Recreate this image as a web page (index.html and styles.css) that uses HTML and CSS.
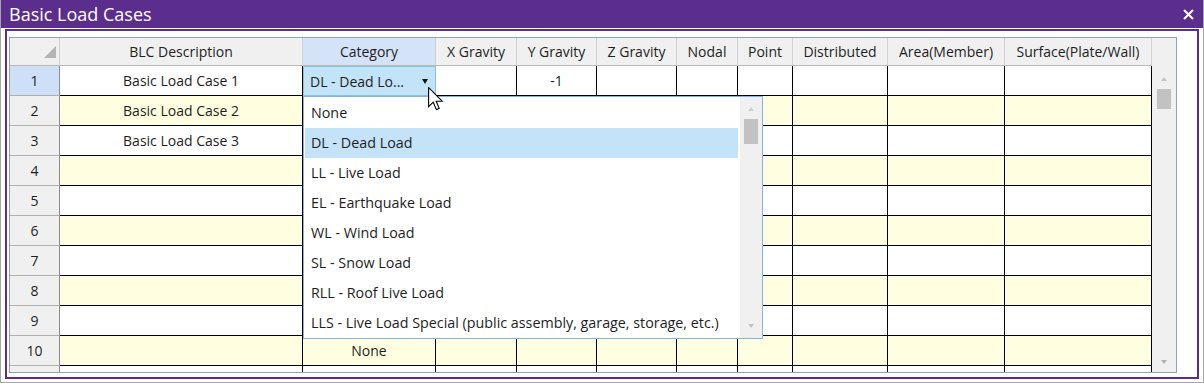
FILE: index.html
```html
<!DOCTYPE html>
<html>
  <head>
    <meta charset="utf-8" />
    <link rel="stylesheet" href="styles.css">
    <title>Basic Load Cases</title>
  </head>
  <body>
    <div class="window">
      <div class="titlebar">
        <span class="title">Basic Load Cases</span>
        <svg class="close" width="11" height="11" viewBox="0 0 11 11">
          <path d="M1 1 L10 10 M10 1 L1 10" stroke="#fff" stroke-width="2" />
        </svg>
      </div>
      <div class="body">
        <div class="frame">
          <div class="sheet">
            <div class="table">
              <div class="row head">
                <div class="c corner">
                  <svg width="12" height="12" viewBox="0 0 12 12"><polygon points="12,0 12,12 0,12" fill="#b4b4b4" /></svg>
                </div>
                <div class="c">BLC Description</div>
                <div class="c active">Category</div>
                <div class="c">X Gravity</div>
                <div class="c">Y Gravity</div>
                <div class="c">Z Gravity</div>
                <div class="c">Nodal</div>
                <div class="c">Point</div>
                <div class="c">Distributed</div>
                <div class="c">Area(Member)</div>
                <div class="c">Surface(Plate/Wall)</div>
              </div>

              <div class="row">
                <div class="c rh sel">1</div>
                <div class="c">Basic Load Case 1</div>
                <div class="c combo"><span>DL - Dead Lo...</span><span class="arrow"></span></div>
                <div class="c"></div>
                <div class="c">-1</div>
                <div class="c"></div>
                <div class="c"></div>
                <div class="c"></div>
                <div class="c"></div>
                <div class="c"></div>
                <div class="c"></div>
              </div>
              <!-- category cells of rows 2-9 sit under the open list -->
              <div class="row alt">
                <div class="c rh">2</div>
                <div class="c">Basic Load Case 2</div>
                <div class="c"></div>
                <div class="c"></div><div class="c"></div><div class="c"></div><div class="c"></div>
                <div class="c"></div><div class="c"></div><div class="c"></div><div class="c"></div>
              </div>
              <div class="row">
                <div class="c rh">3</div>
                <div class="c">Basic Load Case 3</div>
                <div class="c"></div>
                <div class="c"></div><div class="c"></div><div class="c"></div><div class="c"></div>
                <div class="c"></div><div class="c"></div><div class="c"></div><div class="c"></div>
              </div>
              <div class="row alt">
                <div class="c rh">4</div>
                <div class="c"></div>
                <div class="c"></div>
                <div class="c"></div><div class="c"></div><div class="c"></div><div class="c"></div>
                <div class="c"></div><div class="c"></div><div class="c"></div><div class="c"></div>
              </div>
              <div class="row">
                <div class="c rh">5</div>
                <div class="c"></div>
                <div class="c"></div>
                <div class="c"></div><div class="c"></div><div class="c"></div><div class="c"></div>
                <div class="c"></div><div class="c"></div><div class="c"></div><div class="c"></div>
              </div>
              <div class="row alt">
                <div class="c rh">6</div>
                <div class="c"></div>
                <div class="c"></div>
                <div class="c"></div><div class="c"></div><div class="c"></div><div class="c"></div>
                <div class="c"></div><div class="c"></div><div class="c"></div><div class="c"></div>
              </div>
              <div class="row">
                <div class="c rh">7</div>
                <div class="c"></div>
                <div class="c"></div>
                <div class="c"></div><div class="c"></div><div class="c"></div><div class="c"></div>
                <div class="c"></div><div class="c"></div><div class="c"></div><div class="c"></div>
              </div>
              <div class="row alt">
                <div class="c rh">8</div>
                <div class="c"></div>
                <div class="c"></div>
                <div class="c"></div><div class="c"></div><div class="c"></div><div class="c"></div>
                <div class="c"></div><div class="c"></div><div class="c"></div><div class="c"></div>
              </div>
              <div class="row">
                <div class="c rh">9</div>
                <div class="c"></div>
                <div class="c"></div>
                <div class="c"></div><div class="c"></div><div class="c"></div><div class="c"></div>
                <div class="c"></div><div class="c"></div><div class="c"></div><div class="c"></div>
              </div>
              <div class="row alt">
                <div class="c rh">10</div>
                <div class="c"></div>
                <div class="c">None</div>
                <div class="c"></div><div class="c"></div><div class="c"></div><div class="c"></div>
                <div class="c"></div><div class="c"></div><div class="c"></div><div class="c"></div>
              </div>
              <div class="row">
                <div class="c rh"></div>
                <div class="c"></div>
                <div class="c"></div>
                <div class="c"></div><div class="c"></div><div class="c"></div><div class="c"></div>
                <div class="c"></div><div class="c"></div><div class="c"></div><div class="c"></div>
              </div>
            </div>

            <div class="vscroll">
              <div class="vs-head"></div>
              <div class="vs-track">
                <span class="up"></span>
                <span class="thumb"></span>
                <span class="down"></span>
              </div>
            </div>

            <!-- open category list -->
            <div class="dropdown">
              <div class="dd-list">
                <div class="item">None</div>
                <div class="item hl">DL - Dead Load</div>
                <div class="item">LL - Live Load</div>
                <div class="item">EL - Earthquake Load</div>
                <div class="item">WL - Wind Load</div>
                <div class="item">SL - Snow Load</div>
                <div class="item">RLL - Roof Live Load</div>
                <div class="item">LLS - Live Load Special (public assembly, garage, storage, etc.)</div>
              </div>
              <div class="dd-scroll">
                <span class="up"></span>
                <span class="thumb"></span>
                <span class="down"></span>
              </div>
            </div>

            <svg class="cursor" width="16" height="24" viewBox="0 0 16 24">
              <path d="M0.6 0.6 L0.6 19.6 L5.2 15.2 L8.4 22.6 L11.2 21.4 L8.2 14.2 L14.2 14.2 Z" fill="#fff" stroke="#000" stroke-width="1.1" stroke-linejoin="miter" />
            </svg>
          </div>
        </div>
      </div>
    </div>
  </body>
</html>
```

FILE: styles.css
```css
body {
  margin: 0;
  background-color: #fff;
  font-family: "Open Sans", sans-serif;
  font-size: 14px;
  color: #1e1e1e;
}
.window {
  width: 1204px;
  height: 383px;
  box-sizing: border-box;
  border: 1px solid #a6a6a6;
  border-top: none;
  display: flex;
  flex-direction: column;
}
.titlebar {
  height: 28px;
  flex-shrink: 0;
  background-color: #5b2e8e;
  color: #fff;
  display: flex;
  align-items: center;
  justify-content: space-between;
  padding: 0 9px 0 8px;
}
.title {
  font-size: 18px;
}
.body {
  flex: 1;
  min-height: 0;
  padding: 1px 4px 3px 4px;
}
.frame {
  height: 100%;
  box-sizing: border-box;
  border: 2px solid #5b2e8e;
  padding: 6px 0 0 2px;
}
.sheet {
  position: relative;
  width: 1168px;
  height: 336px;
  box-sizing: border-box;
  border: 1px solid #8fa4b9;
  display: flex;
  overflow: hidden;
}
.table {
  width: 1142px;
  flex-shrink: 0;
}
.row {
  display: grid;
  grid-template-columns: 50px 243px 133px 81px 80px 80px 61px 55px 95px 117px 147px;
  height: 30px;
}
.row.head {
  height: 28px;
}
.c {
  box-sizing: border-box;
  border-right: 1px solid #000;
  border-bottom: 1px solid #000;
  display: flex;
  align-items: center;
  justify-content: center;
  white-space: nowrap;
  overflow: hidden;
}
.alt .c {
  background-color: #fffee1;
}
.head .c {
  background-color: #f0f0f0;
  border-right-color: #d0d0d0;
  border-bottom-color: #b9b9b9;
}
.head .c.active {
  background-color: #d5e3f9;
}
.head .corner {
  justify-content: flex-end;
  align-items: flex-end;
  padding: 0 3px 7px 0;
}
.c.rh,
.alt .c.rh {
  background-color: #f0f0f0;
  border-right-color: #8c8c8c;
  border-bottom-color: #b0b0b0;
}
.c.rh.sel {
  background-color: #cde0f8;
}
.c.combo {
  background-color: #c3e3f8;
  border: 1px solid #80c5dc;
  justify-content: space-between;
  padding: 0 7px 0 6px;
}
.combo .arrow {
  width: 0;
  height: 0;
  border-left: 3.5px solid transparent;
  border-right: 3.5px solid transparent;
  border-top: 5px solid #111;
}

/* scrollbars */
.vscroll {
  width: 24px;
  background-color: #f0f0f0;
  display: flex;
  flex-direction: column;
}
.vs-head {
  height: 28px;
}
.vs-track,
.dd-scroll {
  flex: 1;
  display: flex;
  flex-direction: column;
  align-items: center;
}
.up,
.down {
  width: 0;
  height: 0;
  border-left: 3px solid transparent;
  border-right: 3px solid transparent;
}
.up {
  border-bottom: 4px solid #c4c4c4;
}
.down {
  border-top: 4px solid #b0b0b0;
  margin-top: auto;
}
.thumb {
  width: 14px;
  background-color: #c2c2c2;
}
.vs-track .up {
  margin-top: 11px;
}
.vs-track .thumb {
  height: 20px;
  margin-top: 8px;
}
.vs-track .down {
  margin-bottom: 8px;
}

/* dropdown */
.dropdown {
  position: absolute;
  left: 293px;
  top: 58px;
  width: 460px;
  height: 243px;
  box-sizing: border-box;
  border: 1px solid #84b3e6;
  background-color: #fff;
  display: flex;
}
.dd-list {
  flex: 1;
  padding: 1px 2px 0 1px;
}
.item {
  height: 30px;
  line-height: 30px;
  padding-left: 6px;
  font-size: 14.3px;
  white-space: nowrap;
}
.item.hl {
  background-color: #c4e3f9;
}
.dd-scroll {
  width: 22px;
  flex: none;
  background-color: #f0f0f0;
}
.dd-scroll .up {
  margin-top: 10px;
  border-bottom-color: #d0d0d0;
}
.dd-scroll .thumb {
  height: 25px;
  margin-top: 8px;
}
.dd-scroll .down {
  margin-bottom: 10px;
  border-top-color: #c4c4c4;
}
.cursor {
  position: absolute;
  left: 418px;
  top: 49px;
}
```
